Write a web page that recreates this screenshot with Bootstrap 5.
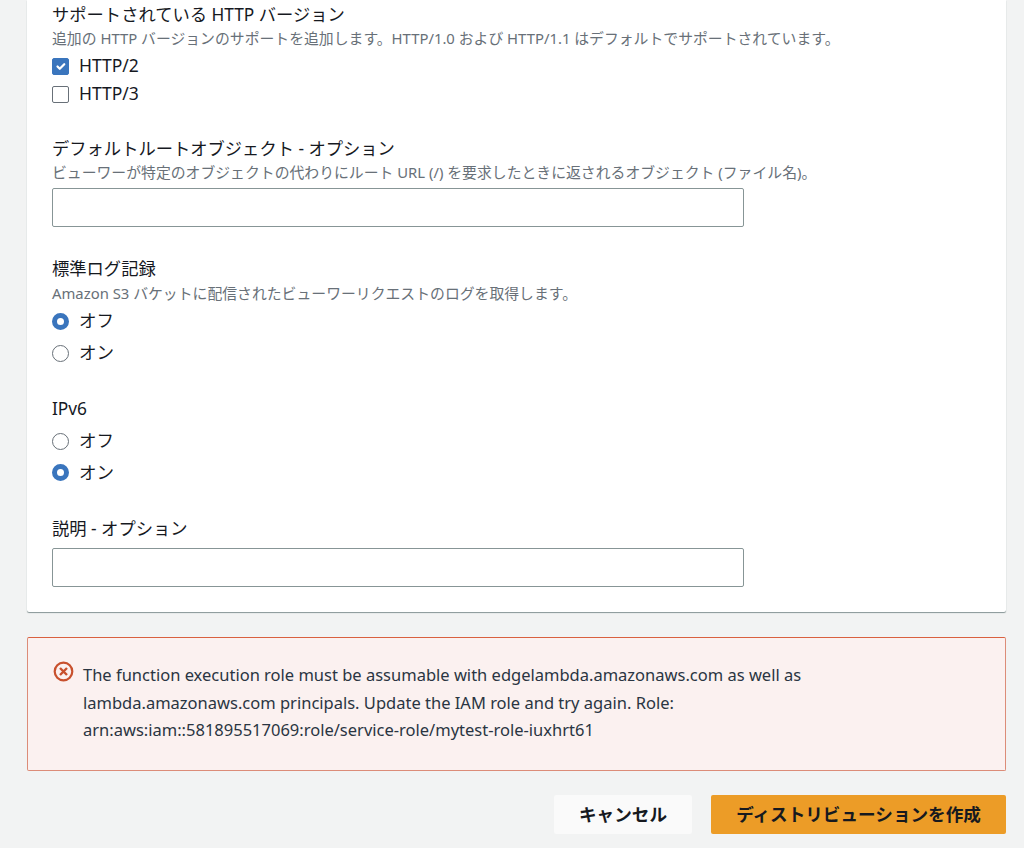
<!DOCTYPE html>
<html lang="ja">
<head>
<meta charset="utf-8">
<title>Distribution</title>
<link href="https://cdn.jsdelivr.net/npm/bootstrap@5.3.0/dist/css/bootstrap.min.css" rel="stylesheet">
<style>
html,body{height:848px;overflow:hidden}
body{background:#f2f3f3;font-family:"Noto Sans","Noto Sans CJK JP",sans-serif;color:#16191f;font-size:17.3px;line-height:24px}
.page-wrap{padding:0 18px 0 27px}
.form-panel{background:#fff;border:0;border-radius:0 0 2px 2px;box-shadow:0 1px 1px #879596;padding:3px 25px 25px;height:612px}
.field-title{font-size:17.3px;line-height:24px;color:#16191f;margin:0}
.field-desc{font-size:14.85px;line-height:24px;color:#687078;margin:-1px 0 0}
.opt-list{margin-top:2px}
.opt-row{display:flex;align-items:center;gap:10px;height:28px;margin:0;padding-bottom:2px;font-size:17.5px}
.opt-row .form-check-input{margin:2px 0 0;width:17px;height:17px;flex:none;border:1px solid #687078;box-shadow:none;background-color:#fff}
.opt-row .form-check-input[type=checkbox]{border-radius:2px}
.opt-row .form-check-input:checked{background-color:#3a75bd;border-color:#3a75bd}
.opt-row .form-check-input[type=radio]:checked{background-color:#fff;border:5px solid #3a75bd;background-image:none}
.radio-row{height:32px}
.radio-tight{height:31px}
.text-field{width:692px;height:39px;border:1px solid #879596;border-radius:2px;box-shadow:none;margin-top:4px}
.sec-a{margin-top:29px}
.sec-b{margin-top:30px}
.sec-b .field-desc{margin-top:0}
.sec-c{margin-top:28px}
.sec-d{margin-top:29px}
.sec-d .text-field{margin-top:7px}
.err-box{margin:25px 0 24px;height:134px;background:#fbf1f0;border:1px solid #dc8c78;border-top-color:#d9603f;border-radius:2px;padding:23px 25px;display:flex;gap:9px;color:#2a3542;font-size:16.5px;line-height:27.5px}
.err-box svg{flex:none;margin-top:0}
.err-text{width:760px}
.btn-cancel,.btn-create{height:39px;border-radius:2px;font-weight:700;font-size:17.6px;color:#16191f;padding:0;display:flex;align-items:center;justify-content:center;border:0}
.btn-cancel{width:138px;background:#fafafa}
.btn-create{width:295px;background:#ec9c27}
.btn-create:hover{background:#ec9c27;color:#16191f}
.btn-cancel:hover{background:#fafafa;color:#16191f}
.action-row{gap:19px}
</style>
</head>
<body>
<div class="page-wrap">
  <div class="card form-panel">
    <p class="field-title">サポートされている HTTP バージョン</p>
    <p class="field-desc">追加の HTTP バージョンのサポートを追加します。HTTP/1.0 および HTTP/1.1 はデフォルトでサポートされています。</p>
    <div class="opt-list">
      <label class="opt-row"><input class="form-check-input" type="checkbox" checked>HTTP/2</label>
      <label class="opt-row"><input class="form-check-input" type="checkbox">HTTP/3</label>
    </div>

    <div class="sec-a">
      <p class="field-title">デフォルトルートオブジェクト - オプション</p>
      <p class="field-desc">ビューワーが特定のオブジェクトの代わりにルート URL (/) を要求したときに返されるオブジェクト (ファイル名)。</p>
      <input class="form-control text-field" type="text" aria-label="デフォルトルートオブジェクト">
    </div>

    <div class="sec-b">
      <p class="field-title">標準ログ記録</p>
      <p class="field-desc">Amazon S3 バケットに配信されたビューワーリクエストのログを取得します。</p>
      <label class="opt-row radio-row"><input class="form-check-input" type="radio" name="logging" checked>オフ</label>
      <label class="opt-row radio-row"><input class="form-check-input" type="radio" name="logging">オン</label>
    </div>

    <div class="sec-c">
      <p class="field-title">IPv6</p>
      <label class="opt-row radio-row mt-1"><input class="form-check-input" type="radio" name="ipv6">オフ</label>
      <label class="opt-row radio-tight"><input class="form-check-input" type="radio" name="ipv6" checked>オン</label>
    </div>

    <div class="sec-d">
      <p class="field-title">説明 - オプション</p>
      <input class="form-control text-field" type="text" aria-label="説明">
    </div>
  </div>

  <div class="err-box" role="alert">
    <svg width="21" height="21" viewBox="0 0 21 21" fill="none" stroke="#c8512e" stroke-width="2.2">
      <circle cx="10.5" cy="10.5" r="8.8"/>
      <path d="M7 7l7 7M14 7l-7 7" stroke-width="2.4"/>
    </svg>
    <div class="err-text">The function execution role must be assumable with edgelambda.amazonaws.com as well as lambda.amazonaws.com principals. Update the IAM role and try again. Role: arn:aws:iam::581895517069:role/service-role/mytest-role-iuxhrt61</div>
  </div>

  <div class="d-flex justify-content-end action-row">
    <button type="button" class="btn btn-cancel">キャンセル</button>
    <button type="button" class="btn btn-create">ディストリビューションを作成</button>
  </div>
</div>
<script src="https://cdn.jsdelivr.net/npm/bootstrap@5.3.0/dist/js/bootstrap.bundle.min.js"></script>
</body>
</html>
